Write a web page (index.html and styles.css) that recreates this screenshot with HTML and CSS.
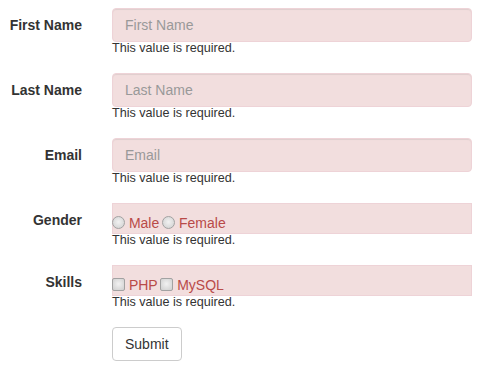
FILE: index.html
```html
<!DOCTYPE html>
<html>
<head>
<meta charset="utf-8">
<link rel="stylesheet" href="styles.css">
</head>
<body>
<form class="form">
  <div class="group">
    <label class="label">First Name</label>
    <div class="field">
      <input class="input" type="text" placeholder="First Name">
      <ul class="errors"><li>This value is required.</li></ul>
    </div>
  </div>
  <div class="group">
    <label class="label">Last Name</label>
    <div class="field">
      <input class="input" type="text" placeholder="Last Name">
      <ul class="errors"><li>This value is required.</li></ul>
    </div>
  </div>
  <div class="group">
    <label class="label">Email</label>
    <div class="field">
      <input class="input" type="text" placeholder="Email">
      <ul class="errors"><li>This value is required.</li></ul>
    </div>
  </div>
  <div class="group">
    <label class="label">Gender</label>
    <div class="field">
      <div class="choice"><input class="radio" type="radio" name="g"> Male <input class="radio" type="radio" name="g"> Female</div>
      <ul class="errors"><li>This value is required.</li></ul>
    </div>
  </div>
  <div class="group">
    <label class="label">Skills</label>
    <div class="field">
      <div class="choice"><input class="check" type="checkbox"> PHP <input class="check" type="checkbox"> MySQL</div>
      <ul class="errors"><li>This value is required.</li></ul>
    </div>
  </div>
  <div class="group">
    <span></span>
    <div class="field">
      <button class="btn" type="button">Submit</button>
    </div>
  </div>
</form>
</body>
</html>
```
FILE: styles.css
```css
* { box-sizing: border-box; }
html, body { margin: 0; padding: 0; background: #fff; }
body {
  font-family: "Liberation Sans", Arial, sans-serif;
  font-size: 14px;
  line-height: 1.42857;
  color: #333;
}
.form { padding-top: 8px; }
.group {
  display: grid;
  grid-template-columns: 82px 360px;
  column-gap: 30px;
  margin-bottom: 15px;
}
.label {
  text-align: right;
  font-weight: bold;
  padding-top: 7px;
  line-height: 20px;
}
.field { min-width: 0; }
.input {
  display: block;
  width: 100%;
  height: 34px;
  padding: 6px 12px;
  font-family: inherit;
  font-size: 14px;
  line-height: 20px;
  color: #b94a48;
  background: #f2dede;
  border: 1px solid #eed3d7;
  border-radius: 4px;
  box-shadow: inset 0 1px 1px rgba(0,0,0,.075);
  outline: none;
  margin: 0;
}
.input::placeholder { color: #999; }
.errors {
  margin: 0 0 4px;
  padding: 0;
  list-style: none;
  font-size: 12.6px;
  line-height: 12px;
  height: 12px;
}
.choice {
  height: 31px;
  padding-top: 9px;
  line-height: 20px;
  color: #b94a48;
  background: #f2dede;
  border: 1px solid #eed3d7;
  white-space: nowrap;
}
.radio, .check {
  -webkit-appearance: none;
  appearance: none;
  width: 13px;
  height: 13px;
  margin: 0;
  vertical-align: -1px;
  border: 1px solid #a2a2a2;
  background: radial-gradient(circle at 50% 45%, #f2f2f2 0%, #dedede 55%, #cfcfcf 100%);
}
.radio { border-radius: 50%; margin-left: -1px; }
.check { border-radius: 2px; margin-left: -1px; }
.btn {
  display: inline-block;
  padding: 6px 12px;
  font-family: inherit;
  font-size: 14px;
  line-height: 20px;
  color: #333;
  background: #fff;
  border: 1px solid #ccc;
  border-radius: 4px;
  margin: 0;
}
```
